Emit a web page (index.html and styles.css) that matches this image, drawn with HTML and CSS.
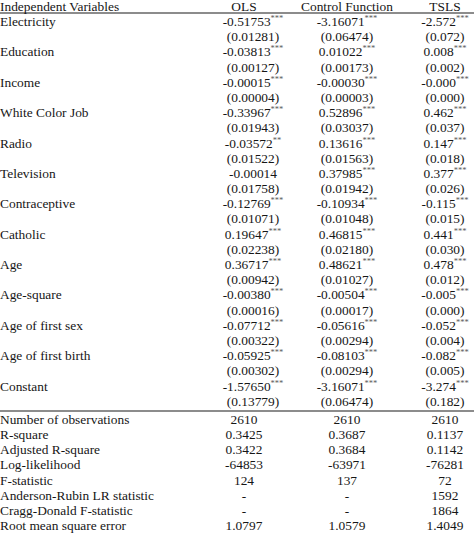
FILE: index.html
```html
<!DOCTYPE html>
<html>
<head>
<meta charset="utf-8">
<link rel="stylesheet" href="styles.css">
</head>
<body>
<div class="table">
  <div class="row head">
    <div class="lab">Independent Variables</div>
    <div class="c1">OLS</div>
    <div class="c2">Control Function</div>
    <div class="c3">TSLS</div>
  </div>
  <div class="body">
    <div class="row"><div class="lab">Electricity</div><div class="c1 coef">-0.51753<sup>***</sup></div><div class="c2 coef">-3.16071<sup>***</sup></div><div class="c3 coef">-2.572<sup>***</sup></div></div>
    <div class="row"><div class="lab"></div><div class="c1 se">(0.01281)</div><div class="c2 se">(0.06474)</div><div class="c3 se">(0.072)</div></div>
    <div class="row"><div class="lab">Education</div><div class="c1 coef">-0.03813<sup>***</sup></div><div class="c2 coef">0.01022<sup>***</sup></div><div class="c3 coef">0.008<sup>***</sup></div></div>
    <div class="row"><div class="lab"></div><div class="c1 se">(0.00127)</div><div class="c2 se">(0.00173)</div><div class="c3 se">(0.002)</div></div>
    <div class="row"><div class="lab">Income</div><div class="c1 coef">-0.00015<sup>***</sup></div><div class="c2 coef">-0.00030<sup>***</sup></div><div class="c3 coef">-0.000<sup>***</sup></div></div>
    <div class="row"><div class="lab"></div><div class="c1 se">(0.00004)</div><div class="c2 se">(0.00003)</div><div class="c3 se">(0.000)</div></div>
    <div class="row"><div class="lab">White Color Job</div><div class="c1 coef">-0.33967<sup>***</sup></div><div class="c2 coef">0.52896<sup>***</sup></div><div class="c3 coef">0.462<sup>***</sup></div></div>
    <div class="row"><div class="lab"></div><div class="c1 se">(0.01943)</div><div class="c2 se">(0.03037)</div><div class="c3 se">(0.037)</div></div>
    <div class="row"><div class="lab">Radio</div><div class="c1 coef">-0.03572<sup>**</sup></div><div class="c2 coef">0.13616<sup>***</sup></div><div class="c3 coef">0.147<sup>***</sup></div></div>
    <div class="row"><div class="lab"></div><div class="c1 se">(0.01522)</div><div class="c2 se">(0.01563)</div><div class="c3 se">(0.018)</div></div>
    <div class="row"><div class="lab">Television</div><div class="c1 coef">-0.00014</div><div class="c2 coef">0.37985<sup>***</sup></div><div class="c3 coef">0.377<sup>***</sup></div></div>
    <div class="row"><div class="lab"></div><div class="c1 se">(0.01758)</div><div class="c2 se">(0.01942)</div><div class="c3 se">(0.026)</div></div>
    <div class="row"><div class="lab">Contraceptive</div><div class="c1 coef">-0.12769<sup>***</sup></div><div class="c2 coef">-0.10934<sup>***</sup></div><div class="c3 coef">-0.115<sup>***</sup></div></div>
    <div class="row"><div class="lab"></div><div class="c1 se">(0.01071)</div><div class="c2 se">(0.01048)</div><div class="c3 se">(0.015)</div></div>
    <div class="row"><div class="lab">Catholic</div><div class="c1 coef">0.19647<sup>***</sup></div><div class="c2 coef">0.46815<sup>***</sup></div><div class="c3 coef">0.441<sup>***</sup></div></div>
    <div class="row"><div class="lab"></div><div class="c1 se">(0.02238)</div><div class="c2 se">(0.02180)</div><div class="c3 se">(0.030)</div></div>
    <div class="row"><div class="lab">Age</div><div class="c1 coef">0.36717<sup>***</sup></div><div class="c2 coef">0.48621<sup>***</sup></div><div class="c3 coef">0.478<sup>***</sup></div></div>
    <div class="row"><div class="lab"></div><div class="c1 se">(0.00942)</div><div class="c2 se">(0.01027)</div><div class="c3 se">(0.012)</div></div>
    <div class="row"><div class="lab">Age-square</div><div class="c1 coef">-0.00380<sup>***</sup></div><div class="c2 coef">-0.00504<sup>***</sup></div><div class="c3 coef">-0.005<sup>***</sup></div></div>
    <div class="row"><div class="lab"></div><div class="c1 se">(0.00016)</div><div class="c2 se">(0.00017)</div><div class="c3 se">(0.000)</div></div>
    <div class="row"><div class="lab">Age of first sex</div><div class="c1 coef">-0.07712<sup>***</sup></div><div class="c2 coef">-0.05616<sup>***</sup></div><div class="c3 coef">-0.052<sup>***</sup></div></div>
    <div class="row"><div class="lab"></div><div class="c1 se">(0.00322)</div><div class="c2 se">(0.00294)</div><div class="c3 se">(0.004)</div></div>
    <div class="row"><div class="lab">Age of first birth</div><div class="c1 coef">-0.05925<sup>***</sup></div><div class="c2 coef">-0.08103<sup>***</sup></div><div class="c3 coef">-0.082<sup>***</sup></div></div>
    <div class="row"><div class="lab"></div><div class="c1 se">(0.00302)</div><div class="c2 se">(0.00294)</div><div class="c3 se">(0.005)</div></div>
    <div class="row"><div class="lab">Constant</div><div class="c1 coef">-1.57650<sup>***</sup></div><div class="c2 coef">-3.16071<sup>***</sup></div><div class="c3 coef">-3.274<sup>***</sup></div></div>
    <div class="row"><div class="lab"></div><div class="c1 se">(0.13779)</div><div class="c2 se">(0.06474)</div><div class="c3 se">(0.182)</div></div>
  </div>
  <div class="stats">
    <div class="row"><div class="lab">Number of observations</div><div class="c1">2610</div><div class="c2">2610</div><div class="c3">2610</div></div>
    <div class="row"><div class="lab">R-square</div><div class="c1">0.3425</div><div class="c2">0.3687</div><div class="c3">0.1137</div></div>
    <div class="row"><div class="lab">Adjusted R-square</div><div class="c1">0.3422</div><div class="c2">0.3684</div><div class="c3">0.1142</div></div>
    <div class="row"><div class="lab">Log-likelihood</div><div class="c1">-64853</div><div class="c2">-63971</div><div class="c3">-76281</div></div>
    <div class="row"><div class="lab">F-statistic</div><div class="c1">124</div><div class="c2">137</div><div class="c3">72</div></div>
    <div class="row"><div class="lab">Anderson-Rubin LR statistic</div><div class="c1">-</div><div class="c2">-</div><div class="c3">1592</div></div>
    <div class="row"><div class="lab">Cragg-Donald F-statistic</div><div class="c1">-</div><div class="c2">-</div><div class="c3">1864</div></div>
    <div class="row"><div class="lab">Root mean square error</div><div class="c1">1.0797</div><div class="c2">1.0579</div><div class="c3">1.4049</div></div>
  </div>
</div>
</body>
</html>
```
FILE: styles.css
```css
html, body {
  margin: 0;
  padding: 0;
  background: #ffffff;
}
.table {
  width: 474px;
  font-family: "Liberation Serif", "Times New Roman", serif;
  font-size: 13.4px;
  color: #161616;
}
.row {
  display: grid;
  grid-template-columns: 196px 96px 104px 78px;
  height: 15.2px;
  line-height: 15.2px;
  white-space: nowrap;
}
.row.head {
  height: 12px;
  line-height: 13px;
  border-bottom: 2px solid #8c8c8c;
}
.body {
  padding-bottom: 1px;
  border-bottom: 2px solid #8c8c8c;
}
.lab {
  padding-left: 0;
}
.c1, .c2, .c3 {
  text-align: center;
}
.c1.coef, .c1.se {
  padding-left: 18px;
}
.c2 {
  padding-left: 6px;
}
.c3 {
  padding-left: 20px;
}
sup {
  font-size: 8.5px;
  line-height: 0;
  vertical-align: 5px;
  color: #5a5a5a;
}
```
